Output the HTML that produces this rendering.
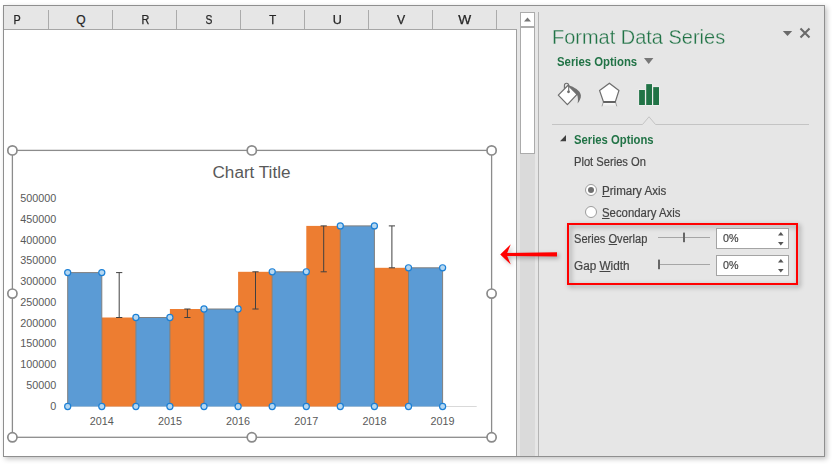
<!DOCTYPE html>
<html>
<head>
<meta charset="utf-8">
<title>Format Data Series</title>
<style>
*{box-sizing:border-box;margin:0;padding:0}
html,body{width:835px;height:467px;background:#fff;overflow:hidden}
body{position:relative;font-family:"Liberation Sans",sans-serif;color:#444}
.abs{position:absolute}
#frame{left:3px;top:5px;width:822px;height:452px;border:1px solid #8f8f8f;background:#e6e6e6;box-shadow:2px 2px 5px rgba(0,0,0,.24)}
#sheet{left:4px;top:29px;width:513px;height:427px;background:#fff;border-top:1px solid #a6a6a6;border-right:1px solid #a0a0a0}
.colsep{top:10px;width:1px;height:19px;background:#ababab}
.colhd{top:11px;width:64px;height:18px;line-height:18px;font-size:12px;text-align:center;color:#262626}
#sbtrack{left:520px;top:27px;width:15px;height:429px;background:#dadada}
#sbup{left:520px;top:12px;width:15px;height:15px;background:#fff;border:1px solid #ababab}
#sbthumb{left:520px;top:27px;width:15px;height:127px;background:#fff;border:1px solid #ababab}
#sbline{left:538px;top:12px;width:1px;height:444px;background:#b4b4b4}
.colhd span{display:inline-block;transform:scaleX(.86);-webkit-text-stroke:0.25px #262626}
.t{white-space:nowrap;line-height:1;transform-origin:0 0;-webkit-text-stroke:0.2px currentColor}

.radio{width:12px;height:12px;border-radius:50%;border:1px solid #9c9c9c;background:#fff}
.radio i{display:block;width:6px;height:6px;border-radius:50%;background:#707070;margin:2px}
.inp{width:73px;height:21px;background:#fff;border:1px solid #a4a4a4}
u{text-decoration:underline;text-underline-offset:1px}
</style>
</head>
<body>
<div id="frame" class="abs"></div>
<div id="sheet" class="abs"></div>
<!-- column headers -->
<div class="abs colsep" style="left:48px"></div>
<div class="abs colsep" style="left:112px"></div>
<div class="abs colsep" style="left:176px"></div>
<div class="abs colsep" style="left:240px"></div>
<div class="abs colsep" style="left:304px"></div>
<div class="abs colsep" style="left:368px"></div>
<div class="abs colsep" style="left:432px"></div>
<div class="abs colsep" style="left:496px"></div>
<div class="abs colhd" style="left:-15.4px"><span style="transform:scaleX(0.9)">P</span></div>
<div class="abs colhd" style="left:49px"><span style="transform:scaleX(1.0)">Q</span></div>
<div class="abs colhd" style="left:113px"><span style="transform:scaleX(0.9)">R</span></div>
<div class="abs colhd" style="left:177px"><span style="transform:scaleX(0.86)">S</span></div>
<div class="abs colhd" style="left:241px"><span style="transform:scaleX(0.95)">T</span></div>
<div class="abs colhd" style="left:305px"><span style="transform:scaleX(1.05)">U</span></div>
<div class="abs colhd" style="left:369px"><span style="transform:scaleX(1.02)">V</span></div>
<div class="abs colhd" style="left:433px"><span style="transform:scaleX(1.14)">W</span></div>
<!-- scrollbar -->
<div id="sbtrack" class="abs"></div>
<div id="sbup" class="abs"></div>
<div id="sbthumb" class="abs"></div>
<div id="sbline" class="abs"></div>
<svg class="abs" style="left:520px;top:12px" width="16" height="15"><polygon points="4,9.4 11,9.4 7.5,5.4" fill="#777"/></svg>

<!-- chart -->
<svg id="chart" class="abs" style="left:0;top:140px" width="520" height="310" viewBox="0 140 520 310" font-family="Liberation Sans, sans-serif">
  <rect x="12.4" y="150.4" width="479.2" height="286.9" fill="#fff" stroke="#8c8c8c" stroke-width="1.3"/>
  <line x1="67.7" y1="406.5" x2="476.7" y2="406.5" stroke="#d9d9d9" stroke-width="1"/>
  <rect x="101.8" y="317.5" width="34.1" height="89.0" fill="#ed7d31"/>
  <rect x="169.9" y="309.0" width="34.1" height="97.5" fill="#ed7d31"/>
  <rect x="238.1" y="271.8" width="34.1" height="134.7" fill="#ed7d31"/>
  <rect x="306.3" y="225.9" width="34.1" height="180.6" fill="#ed7d31"/>
  <rect x="374.4" y="267.8" width="34.1" height="138.7" fill="#ed7d31"/>
  <rect x="67.7" y="272.6" width="34.1" height="133.9" fill="#5b9bd5"/>
  <path d="M67.7 406.5 V272.6 H101.8 V406.5" fill="none" stroke="#7f7f7f" stroke-width="1"/>
  <rect x="135.9" y="317.5" width="34.1" height="89.0" fill="#5b9bd5"/>
  <path d="M135.9 406.5 V317.5 H169.9 V406.5" fill="none" stroke="#7f7f7f" stroke-width="1"/>
  <rect x="204.0" y="309.0" width="34.1" height="97.5" fill="#5b9bd5"/>
  <path d="M204.0 406.5 V309.0 H238.1 V406.5" fill="none" stroke="#7f7f7f" stroke-width="1"/>
  <rect x="272.2" y="271.8" width="34.1" height="134.7" fill="#5b9bd5"/>
  <path d="M272.2 406.5 V271.8 H306.3 V406.5" fill="none" stroke="#7f7f7f" stroke-width="1"/>
  <rect x="340.3" y="225.9" width="34.1" height="180.6" fill="#5b9bd5"/>
  <path d="M340.3 406.5 V225.9 H374.4 V406.5" fill="none" stroke="#7f7f7f" stroke-width="1"/>
  <rect x="408.5" y="267.8" width="34.1" height="138.7" fill="#5b9bd5"/>
  <path d="M408.5 406.5 V267.8 H442.6 V406.5" fill="none" stroke="#7f7f7f" stroke-width="1"/>
  <path d="M116.1 272.6 H122.3 M119.2 272.6 V317.5 M116.1 317.5 H122.3" fill="none" stroke="#404040" stroke-width="1"/>
  <path d="M184.3 309.0 H190.5 M187.4 309.0 V317.5 M184.3 317.5 H190.5" fill="none" stroke="#404040" stroke-width="1"/>
  <path d="M252.4 271.8 H258.6 M255.5 271.8 V309.0 M252.4 309.0 H258.6" fill="none" stroke="#404040" stroke-width="1"/>
  <path d="M320.6 225.9 H326.8 M323.7 225.9 V271.8 M320.6 271.8 H326.8" fill="none" stroke="#404040" stroke-width="1"/>
  <path d="M388.8 225.9 H395.0 M391.9 225.9 V267.8 M388.8 267.8 H395.0" fill="none" stroke="#404040" stroke-width="1"/>
  <circle cx="67.7" cy="272.6" r="3.05" fill="#b5d7f1" stroke="#1c80d6" stroke-width="1.2"/>
  <circle cx="101.8" cy="272.6" r="3.05" fill="#b5d7f1" stroke="#1c80d6" stroke-width="1.2"/>
  <circle cx="67.7" cy="406.5" r="3.05" fill="#b5d7f1" stroke="#1c80d6" stroke-width="1.2"/>
  <circle cx="101.8" cy="406.5" r="3.05" fill="#b5d7f1" stroke="#1c80d6" stroke-width="1.2"/>
  <circle cx="135.9" cy="317.5" r="3.05" fill="#b5d7f1" stroke="#1c80d6" stroke-width="1.2"/>
  <circle cx="169.9" cy="317.5" r="3.05" fill="#b5d7f1" stroke="#1c80d6" stroke-width="1.2"/>
  <circle cx="135.9" cy="406.5" r="3.05" fill="#b5d7f1" stroke="#1c80d6" stroke-width="1.2"/>
  <circle cx="169.9" cy="406.5" r="3.05" fill="#b5d7f1" stroke="#1c80d6" stroke-width="1.2"/>
  <circle cx="204.0" cy="309.0" r="3.05" fill="#b5d7f1" stroke="#1c80d6" stroke-width="1.2"/>
  <circle cx="238.1" cy="309.0" r="3.05" fill="#b5d7f1" stroke="#1c80d6" stroke-width="1.2"/>
  <circle cx="204.0" cy="406.5" r="3.05" fill="#b5d7f1" stroke="#1c80d6" stroke-width="1.2"/>
  <circle cx="238.1" cy="406.5" r="3.05" fill="#b5d7f1" stroke="#1c80d6" stroke-width="1.2"/>
  <circle cx="272.2" cy="271.8" r="3.05" fill="#b5d7f1" stroke="#1c80d6" stroke-width="1.2"/>
  <circle cx="306.3" cy="271.8" r="3.05" fill="#b5d7f1" stroke="#1c80d6" stroke-width="1.2"/>
  <circle cx="272.2" cy="406.5" r="3.05" fill="#b5d7f1" stroke="#1c80d6" stroke-width="1.2"/>
  <circle cx="306.3" cy="406.5" r="3.05" fill="#b5d7f1" stroke="#1c80d6" stroke-width="1.2"/>
  <circle cx="340.3" cy="225.9" r="3.05" fill="#b5d7f1" stroke="#1c80d6" stroke-width="1.2"/>
  <circle cx="374.4" cy="225.9" r="3.05" fill="#b5d7f1" stroke="#1c80d6" stroke-width="1.2"/>
  <circle cx="340.3" cy="406.5" r="3.05" fill="#b5d7f1" stroke="#1c80d6" stroke-width="1.2"/>
  <circle cx="374.4" cy="406.5" r="3.05" fill="#b5d7f1" stroke="#1c80d6" stroke-width="1.2"/>
  <circle cx="408.5" cy="267.8" r="3.05" fill="#b5d7f1" stroke="#1c80d6" stroke-width="1.2"/>
  <circle cx="442.6" cy="267.8" r="3.05" fill="#b5d7f1" stroke="#1c80d6" stroke-width="1.2"/>
  <circle cx="408.5" cy="406.5" r="3.05" fill="#b5d7f1" stroke="#1c80d6" stroke-width="1.2"/>
  <circle cx="442.6" cy="406.5" r="3.05" fill="#b5d7f1" stroke="#1c80d6" stroke-width="1.2"/>
  <text x="56.2" y="409.7" text-anchor="end" font-size="10.8" fill="#595959">0</text>
  <text x="56.2" y="388.9" text-anchor="end" font-size="10.8" fill="#595959">50000</text>
  <text x="56.2" y="368.1" text-anchor="end" font-size="10.8" fill="#595959">100000</text>
  <text x="56.2" y="347.4" text-anchor="end" font-size="10.8" fill="#595959">150000</text>
  <text x="56.2" y="326.6" text-anchor="end" font-size="10.8" fill="#595959">200000</text>
  <text x="56.2" y="305.8" text-anchor="end" font-size="10.8" fill="#595959">250000</text>
  <text x="56.2" y="285.0" text-anchor="end" font-size="10.8" fill="#595959">300000</text>
  <text x="56.2" y="264.2" text-anchor="end" font-size="10.8" fill="#595959">350000</text>
  <text x="56.2" y="243.5" text-anchor="end" font-size="10.8" fill="#595959">400000</text>
  <text x="56.2" y="222.7" text-anchor="end" font-size="10.8" fill="#595959">450000</text>
  <text x="56.2" y="201.9" text-anchor="end" font-size="10.8" fill="#595959">500000</text>
  <text x="101.8" y="425" text-anchor="middle" font-size="10.8" fill="#595959">2014</text>
  <text x="169.9" y="425" text-anchor="middle" font-size="10.8" fill="#595959">2015</text>
  <text x="238.1" y="425" text-anchor="middle" font-size="10.8" fill="#595959">2016</text>
  <text x="306.3" y="425" text-anchor="middle" font-size="10.8" fill="#595959">2017</text>
  <text x="374.4" y="425" text-anchor="middle" font-size="10.8" fill="#595959">2018</text>
  <text x="442.6" y="425" text-anchor="middle" font-size="10.8" fill="#595959">2019</text>
  <text x="251.5" y="177.8" text-anchor="middle" font-size="16" fill="#595959" textLength="78" lengthAdjust="spacingAndGlyphs">Chart Title</text>
  <circle cx="12.4" cy="150.4" r="4.6" fill="#fff" stroke="#8a8a8a" stroke-width="1.7"/>
  <circle cx="12.4" cy="293.6" r="4.6" fill="#fff" stroke="#8a8a8a" stroke-width="1.7"/>
  <circle cx="12.4" cy="437.3" r="4.6" fill="#fff" stroke="#8a8a8a" stroke-width="1.7"/>
  <circle cx="251.8" cy="150.4" r="4.6" fill="#fff" stroke="#8a8a8a" stroke-width="1.7"/>
  <circle cx="251.8" cy="437.3" r="4.6" fill="#fff" stroke="#8a8a8a" stroke-width="1.7"/>
  <circle cx="491.6" cy="150.4" r="4.6" fill="#fff" stroke="#8a8a8a" stroke-width="1.7"/>
  <circle cx="491.6" cy="293.6" r="4.6" fill="#fff" stroke="#8a8a8a" stroke-width="1.7"/>
  <circle cx="491.6" cy="437.3" r="4.6" fill="#fff" stroke="#8a8a8a" stroke-width="1.7"/>
</svg>

<!-- format pane -->
<div id="t_title" class="abs t" style="left:552.3px;top:26.8px;font-size:20px;color:#217346;-webkit-text-stroke:0.3px #e6e6e6;transform:scaleX(0.9985)">Format Data Series</div>
<div id="t_so1" class="abs t" style="-webkit-text-stroke:0;left:557px;top:56px;font-size:12px;font-weight:bold;color:#217346;transform:scaleX(0.9469)">Series Options</div>
<svg class="abs" style="left:640px;top:54px" width="20" height="14"><polygon points="4,4 13.4,4 8.7,10" fill="#777"/></svg>
<svg class="abs" style="left:778px;top:24px" width="40" height="18"><polygon points="4.8,7 14.2,7 9.5,12" fill="#6a6a6a"/><path d="M22.5 4.5 L31.5 13.5 M31.5 4.5 L22.5 13.5" stroke="#6a6a6a" stroke-width="2.1" fill="none"/></svg>
<!-- icons -->
<svg id="icons" class="abs" style="left:550px;top:78px" width="120" height="32" viewBox="550 78 120 32">
  <defs><linearGradient id="refl" x1="0" y1="0" x2="0" y2="1"><stop offset="0" stop-color="#fff"/><stop offset="1" stop-color="#fff" stop-opacity="0"/></linearGradient></defs>
  <!-- paint bucket -->
  <path d="M568.6 85.3 C574 87 580.2 90.5 580.9 95.2 C581.2 98.2 579.4 101 577.6 103.6 C578.2 100.4 578.2 97.2 577 94.4 Z" fill="#717171"/>
  <path d="M558.3 95.1 L568.1 85.3 L577 94.4 L567.4 104.6 Z" fill="#fff" stroke="#6e6e6e" stroke-width="1.25" stroke-linejoin="round"/>
  <path d="M564.4 88.8 V85.4 A2.15 2.15 0 0 1 568.7 85.4 V91.6" fill="none" stroke="#6e6e6e" stroke-width="1.1"/>
  <circle cx="568.5" cy="91.8" r="1.4" fill="#6e6e6e"/>
  <!-- pentagon -->
  <path d="M603.5 102 H615.3 L616.7 106.4 H602.1 Z" fill="url(#refl)"/>
  <path d="M603.3 102 L602 106.3 M615.5 102 L616.8 106.3" stroke="#a0a0a0" stroke-width="1" fill="none"/>
  <path d="M609.4 83.2 L618.9 90.6 L615.3 101.9 L603.5 101.9 L599.6 90.6 Z" fill="#fff" stroke="#6e6e6e" stroke-width="1.25" stroke-linejoin="round"/>
  <path d="M603.3 102 H615.5" stroke="#606060" stroke-width="1.9"/>
  <!-- bars -->
  <g stroke="#efefef" stroke-width="1.4" paint-order="stroke"><rect x="639.1" y="90" width="5.8" height="15" fill="#217346"/>
  <rect x="646.2" y="84.1" width="5.8" height="20.9" fill="#217346"/>
  <rect x="653.2" y="87.1" width="5.8" height="17.9" fill="#217346"/></g>
</svg>
<svg class="abs" style="left:552px;top:114px" width="260" height="12"><path d="M0 10.5 H90.5 L97 2.8 L103.5 10.5 H257" fill="none" stroke="#c4c4c4" stroke-width="1"/></svg>
<!-- section -->
<svg class="abs" style="left:558px;top:133px" width="10" height="10"><polygon points="8,2 8,8.2 2,8.2" fill="#404040"/></svg>
<div id="t_so2" class="abs t" style="-webkit-text-stroke:0;left:574.4px;top:134px;font-size:12px;font-weight:bold;color:#217346;transform:scaleX(0.9398)">Series Options</div>
<div id="t_pso" class="abs t" style="left:574.4px;top:156px;font-size:12px;transform:scaleX(0.9292)">Plot Series On</div>
<div class="abs radio" style="left:585px;top:184px"><i></i></div>
<div class="abs radio" style="left:585px;top:206px"></div>
<div id="t_pa" class="abs t" style="left:602.3px;top:184.8px;font-size:12px;transform:scaleX(0.9642)"><u>P</u>rimary Axis</div>
<div id="t_sa" class="abs t" style="left:602.3px;top:207px;font-size:12px;transform:scaleX(0.9477)"><u>S</u>econdary Axis</div>
<div id="redbox" class="abs" style="left:567px;top:223px;width:231px;height:62px;border:2px solid #ff0000;filter:drop-shadow(2px 2px 2.5px rgba(0,0,0,.4))"></div>
<div id="t_ov" class="abs t" style="left:574.4px;top:233px;font-size:12px;transform:scaleX(0.9233)">Series <u>O</u>verlap</div>
<div id="t_gw" class="abs t" style="left:574.4px;top:260px;font-size:12px;transform:scaleX(0.9788)">Gap <u>W</u>idth</div>
<svg class="abs" style="left:655px;top:228px" width="60" height="50"><path d="M3 9.5 H55 M3 36.5 H55" stroke="#a6a6a6" stroke-width="1" fill="none"/><rect x="28" y="4.6" width="2" height="9.6" fill="#666"/><rect x="3" y="31.6" width="2" height="9.6" fill="#666"/></svg>
<div class="abs inp" style="left:716px;top:228px"></div>
<div class="abs inp" style="left:716px;top:255px"></div>
<div id="t_p1" class="abs t" style="left:723.2px;top:232.5px;font-size:11px;transform:scaleX(0.9748)">0%</div>
<div id="t_p2" class="abs t" style="left:723.2px;top:259.5px;font-size:11px;transform:scaleX(0.9748)">0%</div>
<svg class="abs" style="left:775px;top:229px" width="12" height="46"><polygon points="3,6.5 8.6,6.5 5.8,3" fill="#555"/><polygon points="3,13 8.6,13 5.8,16.5" fill="#555"/><polygon points="3,33.5 8.6,33.5 5.8,30" fill="#555"/><polygon points="3,40 8.6,40 5.8,43.5" fill="#555"/></svg>
<!-- arrow -->
<svg class="abs" style="left:495px;top:238px;filter:drop-shadow(2px 2px 2px rgba(0,0,0,.3))" width="70" height="34"><path d="M5.2 16.5 L15.8 6.2 L12.2 14.9 L62 14.3 L62 18.4 L12.2 18 L15.8 26.5 Z" fill="#ff0000"/></svg>
</body>
</html>
